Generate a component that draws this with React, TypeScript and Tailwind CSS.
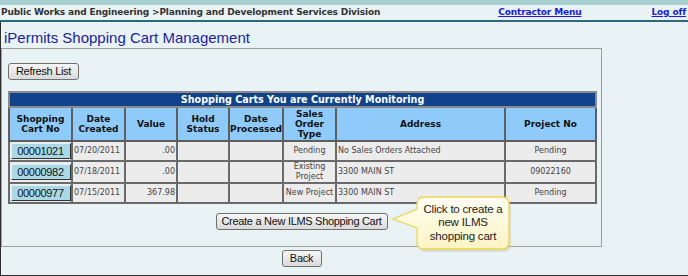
const V = { fontFamily: '"DejaVu Sans", Verdana, sans-serif' };
const A = { fontFamily: '"Liberation Sans", Arial, sans-serif' };

const rows = [
  { no: "00001021", date: "07/20/2011", value: ".00", type: ["Pending"], addr: "No Sales Orders Attached", proj: "Pending", h: "h-[20px]" },
  { no: "00000982", date: "07/18/2011", value: ".00", type: ["Existing", "Project"], addr: "3300 MAIN ST", proj: "09022160", h: "h-[22px]" },
  { no: "00000977", date: "07/15/2011", value: "367.98", type: ["New Project"], addr: "3300 MAIN ST", proj: "Pending", h: "h-[20px]" },
];

const headers: string[][] = [
  ["Shopping", "Cart No"],
  ["Date", "Created"],
  ["Value"],
  ["Hold", "Status"],
  ["Date", "Processed"],
  ["Sales", "Order", "Type"],
  ["Address"],
  ["Project No"],
];

const widths = [63, 53, 52, 52, 54, 53, 169, 91];

const btn =
  "border border-[#707070] rounded-[3px] bg-gradient-to-b from-[#f6f6f6] to-[#dadada] text-[#111] text-[11px] tracking-[-0.3px] leading-none flex items-center justify-center";

export default function App() {
  return (
    <div className="w-[688px] h-[276px] bg-[#e9f3f5] relative overflow-hidden">
      <div className="h-[5px] bg-[#a8cfd0]" />
      <div className="h-[15px] flex items-center text-[9px] font-bold tracking-[-0.14px]" style={V}>
        <span className="pl-[1px] text-[#333]">Public Works and Engineering &gt;Planning and Development Services Division</span>
        <span className="ml-auto text-[#1a1ae0] underline">Contractor Menu</span>
        <span className="ml-[70px] pr-[2px] text-[#1a1ae0] underline">Log off</span>
      </div>
      <div className="h-[2px] bg-[#2a6a7a]" />
      <div className="h-[254px] border-l border-b border-[#2e2e2e] flex flex-col">
        <div className="h-[26px] pl-[3px] pt-[7px] text-[15px] leading-[18px] text-[#1b1f9c]" style={A}>
          iPermits Shopping Cart Management
        </div>
        <div className="w-[601px] h-[199px] border border-[#a19e95] pt-[14px] pl-[6px] flex flex-col">
          <button className={`${btn} w-[71px] h-[17px]`} style={A}>Refresh List</button>
          <table className="mt-[11px] border-collapse table-fixed w-[587px]" style={V}>
            <colgroup>
              {widths.map((w, i) => (
                <col key={i} style={{ width: w }} />
              ))}
            </colgroup>
            <tbody>
              <tr className="h-[15px]">
                <td colSpan={8} className="bg-[#10438b] border-2 border-[#8a8a8a] text-white text-[9.6px] font-bold text-center leading-none p-0">
                  Shopping Carts You are Currently Monitoring
                </td>
              </tr>
              <tr className="h-[34px]">
                {headers.map((h, i) => (
                  <td key={i} className="bg-[#8fcbfa] border-2 border-[#5e5e5e] text-center text-[9px] font-bold text-[#111] leading-[10px] p-0">
                    {h.map((l, j) => (
                      <div key={j}>{l}</div>
                    ))}
                  </td>
                ))}
              </tr>
              {rows.map((r) => (
                <tr key={r.no} className={r.h}>
                  <td className="bg-[#ececec] border-2 border-[#6a6a6a] p-0">
                    <div className="flex justify-center">
                      <button
                        className="w-[60px] h-[16px] bg-[#a9d8e6] border border-[#dff2f8] border-r-[#333] border-b-[#333] text-[11px] tracking-[-0.3px] text-[#111] leading-none"
                        style={A}
                      >
                        {r.no}
                      </button>
                    </div>
                  </td>
                  <td className="bg-[#ececec] border-2 border-[#6a6a6a] p-0 pl-[1px] text-[8px] text-[#444]">{r.date}</td>
                  <td className="bg-[#ececec] border-2 border-[#6a6a6a] p-0 pr-[1px] text-right text-[8px] text-[#444]">{r.value}</td>
                  <td className="bg-[#ececec] border-2 border-[#6a6a6a] p-0" />
                  <td className="bg-[#ececec] border-2 border-[#6a6a6a] p-0" />
                  <td className="bg-[#ececec] border-2 border-[#6a6a6a] p-0 text-center text-[8px] leading-[10px] text-[#444]">
                    {r.type.map((t) => (
                      <div key={t}>{t}</div>
                    ))}
                  </td>
                  <td className="bg-[#ececec] border-2 border-[#6a6a6a] p-0 pl-[1px] text-[8px] text-[#444]">{r.addr}</td>
                  <td className="bg-[#ececec] border-2 border-[#6a6a6a] p-0 text-center text-[8px] text-[#444]">{r.proj}</td>
                </tr>
              ))}
            </tbody>
          </table>
          <div className="mt-[9px] pr-[6px] flex justify-center">
            <button className={`${btn} w-[172px] h-[17px]`} style={A}>Create a New ILMS Shopping Cart</button>
          </div>
        </div>
        <div className="w-[601px] pt-[3px] flex justify-center">
          <button className={`${btn} w-[40px] h-[17px]`} style={A}>Back</button>
        </div>
      </div>

      <svg className="absolute left-[390px] top-[195px]" width="126" height="60" viewBox="0 0 126 60">
        <defs>
          <linearGradient id="tipg" x1="0" y1="0" x2="0" y2="1">
            <stop offset="0" stopColor="#fffff4" />
            <stop offset="1" stopColor="#fff4c4" />
          </linearGradient>
        </defs>
        <path
          d="M 36 5 H 114 Q 121 5 121 12 V 49 Q 121 57 114 57 H 36 Q 29 57 29 49 Z"
          fill="#c8c8c0"
          opacity="0.5"
        />
        <path
          d="M 34 2 H 112 Q 119 2 119 9 V 47 Q 119 54 112 54 H 34 Q 27 54 27 47 V 33 L 3 24 L 27 14 V 9 Q 27 2 34 2 Z"
          fill="url(#tipg)"
          stroke="#f1d453"
          strokeWidth="1.3"
        />
      </svg>
      <div
        className="absolute left-[417px] top-[197px] w-[92px] h-[52px] flex flex-col items-center justify-center text-center text-[11.5px] leading-[13.5px] tracking-[-0.2px] text-[#222]"
        style={A}
      >
        <div>Click to create a</div>
        <div>new ILMS</div>
        <div>shopping cart</div>
      </div>
    </div>
  );
}
